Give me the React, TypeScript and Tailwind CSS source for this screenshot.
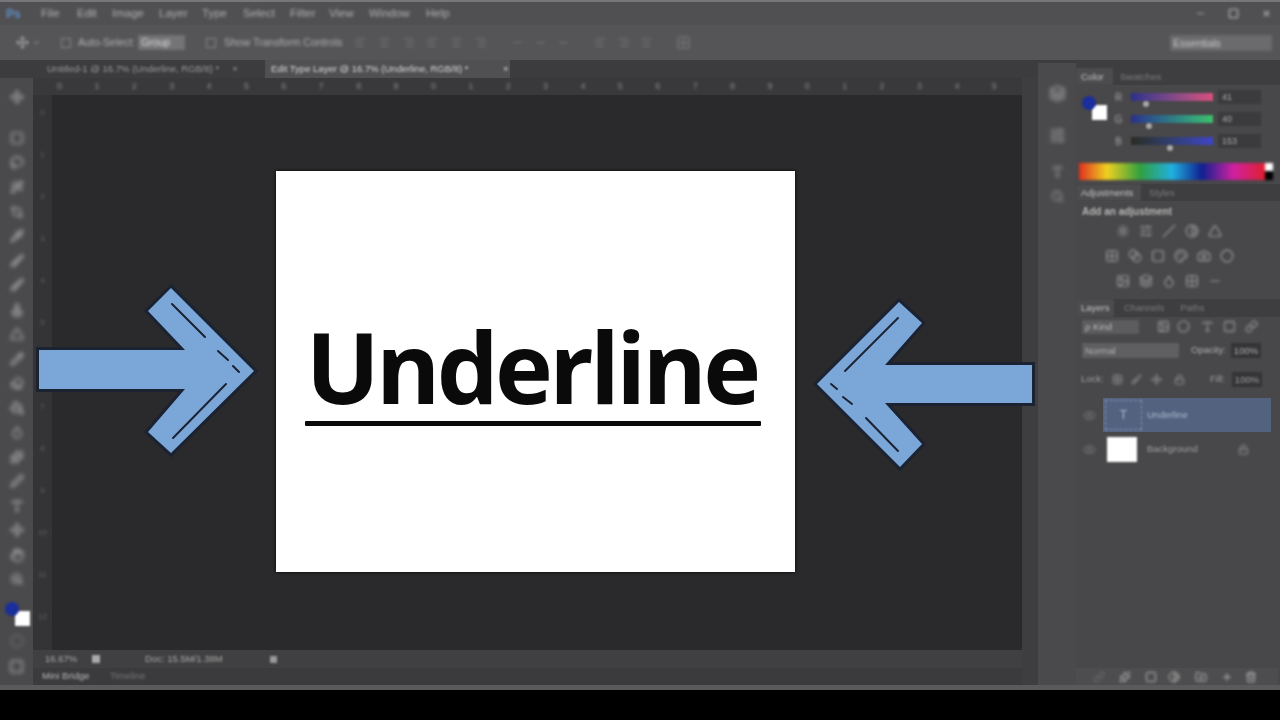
import {
  Blend, Brush, Circle, Contrast, Crop, Droplet, Eraser, Eye, FolderPlus, Grid2x2, Hand, Image, Layers, Lasso, Link, Lock, Minus,
  Move, PaintBucket, Palette, Pen, Pencil, Plus, Search, Slash, Square, Stamp, Sun, Trash2, Triangle, Type, Wand2, ZoomIn,
  AlignCenter, AlignLeft, AlignRight, Pipette, Sparkles, SlidersHorizontal, Camera, ChevronDown,
} from "lucide-react";
import type { ComponentType } from "react";

type Ico = ComponentType<{ className?: string; size?: number; strokeWidth?: number }>;

const menus = [
  { t: "File", w: "w-[36px]" },
  { t: "Edit", w: "w-[35px]" },
  { t: "Image", w: "w-[47px]" },
  { t: "Layer", w: "w-[43px]" },
  { t: "Type", w: "w-[41px]" },
  { t: "Select", w: "w-[47px]" },
  { t: "Filter", w: "w-[39px]" },
  { t: "View", w: "w-[40px]" },
  { t: "Window", w: "w-[57px]" },
  { t: "Help", w: "w-[30px]" },
];

const alignIcons: Ico[] = [AlignLeft, AlignCenter, AlignRight, AlignLeft, AlignCenter, AlignRight];
const distIcons: Ico[] = [Minus, Minus, Minus];

const tools: Ico[] = [
  Square, Lasso, Wand2, Crop, Pipette, Brush, Brush, Stamp, Triangle, Pencil, Eraser, PaintBucket, Droplet, Sparkles, Pen, Type, Move, Hand, ZoomIn,
];

const rulerNums = ["0", "1", "2", "3", "4", "5", "6", "7", "8", "9", "0", "1", "2", "3", "4", "5", "6", "7", "8", "9", "0", "1", "2", "3", "4", "5"];

const adjRows: Ico[][] = [
  [Sun, SlidersHorizontal, Slash, Contrast, Triangle],
  [Grid2x2, Blend, Square, Palette, Camera, Circle],
  [Image, Layers, Droplet, Grid2x2, Minus],
];

function ArrowShape({ shape, lines, className }: { shape: string; lines: number[][]; className: string }) {
  return (
    <svg className={className} viewBox="0 0 1280 720" fill="none">
      <polygon points={shape} fill="#7ba6d8" stroke="#1b2231" strokeWidth="6" strokeLinejoin="miter" paintOrder="stroke" />
      {lines.map((l) => (
        <line key={l.join()} x1={l[0]} y1={l[1]} x2={l[2]} y2={l[3]} stroke="#1b2231" strokeWidth="2" strokeLinecap="round" />
      ))}
    </svg>
  );
}

function ColorRow({ label, gradient, thumb, value }: { label: string; gradient: string; thumb: string; value: string }) {
  return (
    <div className="flex items-center h-[22px]">
      <span className="w-[25px] text-center text-[10px] text-[#aaa] blur-[1.4px]">{label}</span>
      <div className="w-[82px] relative">
        <div className={`h-[8px] blur-[1.2px] ${gradient}`} />
        <div className={`absolute top-[8px] w-[6px] h-[6px] bg-[#aaa] rounded-full blur-[1.2px] ${thumb}`} />
      </div>
      <div className="ml-[5px] w-[43px] h-[14px] bg-[#3b3a3c] text-[9px] text-[#aaa] pl-[4px] leading-[14px] blur-[1px]">{value}</div>
    </div>
  );
}

export default function App() {
  return (
    <div className="relative w-[1280px] h-[720px] bg-black overflow-hidden font-['Liberation_Sans',sans-serif]">
      <div className="h-[690px] flex flex-col bg-[#4a494b]">
        {/* title / menu */}
        <div className="h-[2px] bg-[#77777b]" />
        <div className="h-[23px] bg-[#504f52] flex items-center pl-[6px] pr-[8px]">
          <span className="w-[35px] text-[12px] font-bold text-[#5f8fc4] blur-[1.4px]">Ps</span>
          <div className="flex items-center text-[11.5px] text-[#b0b0b0] blur-[1.4px]">
            {menus.map((m) => (
              <span key={m.t} className={m.w}>{m.t}</span>
            ))}
          </div>
          <div className="ml-auto flex items-center gap-[22px] text-[#aaa] blur-[1.4px]">
            <Minus size={11} />
            <Square size={11} strokeWidth={3} />
            <Plus size={11} strokeWidth={3} className="rotate-45" />
          </div>
        </div>

        {/* options */}
        <div className="h-[35px] bg-[#555457] flex items-center pl-[16px] text-[10.5px] text-[#b0b0b0]">
          <Move size={13} className="blur-[1.4px]" />
          <ChevronDown size={9} className="ml-[3px] blur-[1.4px]" />
          <div className="ml-[20px] w-[10px] h-[10px] border border-[#888] blur-[1.4px]" />
          <span className="ml-[7px] w-[60px] blur-[1.4px]">Auto-Select:</span>
          <div className="w-[47px] h-[15px] bg-[#747376] text-[#ddd] pl-[3px] leading-[15px] blur-[1.4px]">Group</div>
          <div className="ml-[21px] w-[10px] h-[10px] border border-[#888] blur-[1.4px]" />
          <span className="ml-[8px] w-[130px] blur-[1.4px] whitespace-nowrap">Show Transform Controls</span>
          <div className="flex items-center gap-[11px] text-[#77777a] blur-[1.6px]">
            {alignIcons.map((Icon, i) => (
              <Icon key={i} size={13} />
            ))}
          </div>
          <div className="flex items-center gap-[10px] text-[#77777a] blur-[1.6px] ml-[24px]">
            {distIcons.map((Icon, i) => (
              <Icon key={i} size={13} />
            ))}
          </div>
          <div className="flex items-center gap-[10px] text-[#77777a] blur-[1.6px] ml-[24px]">
            <AlignLeft size={13} />
            <AlignRight size={13} />
            <AlignCenter size={13} />
          </div>
          <Grid2x2 size={15} className="ml-[23px] text-[#77777a] blur-[1.6px]" />
          <div className="ml-auto mr-[8px] w-[102px] h-[16px] bg-[#6b6a6d] text-[#ccc] leading-[16px] pl-[3px] blur-[1.4px]">Essentials</div>
        </div>

        <div className="flex-1 flex min-h-0">
          {/* left tools */}
          <div className="w-[33px] flex flex-col">
            <div className="h-[18px] bg-[#3c3b3d]" />
            <div className="flex-1 bg-[#4a494b] flex flex-col items-center pt-[12px] text-[#bdbdbd]">
              <Move size={14} className="blur-[2px] shrink-0" />
              <div className="mt-[27px] flex flex-col gap-[10.5px] items-center">
                {tools.map((Icon, i) => (
                  <Icon key={i} size={14} className="blur-[2px]" />
                ))}
              </div>
              <div className="relative w-[30px] h-[30px] mt-[16px] shrink-0">
                <div className="absolute left-[13px] top-[9px] w-[15px] h-[15px] bg-white blur-[1.2px]" />
                <div className="absolute left-[3px] top-0 w-[14px] h-[14px] rounded-full bg-[#1b2f9c] blur-[1.2px]" />
              </div>
              <Circle size={14} className="mt-[2px] text-[#777] blur-[2px] shrink-0" />
              <Square size={15} className="mt-[11px] blur-[2px] shrink-0" />
            </div>
          </div>

          {/* workspace */}
          <div className="flex-1 flex flex-col min-w-0">
            <div className="h-[18px] bg-[#3c3b3d] flex text-[9.5px] text-[#9a9a9a] pl-[14px]">
              <div className="w-[218px] flex items-center gap-[13px]">
                <span className="blur-[1.3px] whitespace-nowrap">Untitled-1 @ 16.7% (Underline, RGB/8) *</span>
                <span className="blur-[1.3px]">×</span>
              </div>
              <div className="w-[245px] bg-[#504f52] flex items-center pl-[6px] text-[#d8d8d8]">
                <span className="blur-[1.3px] whitespace-nowrap w-[232px]">Edit Type Layer @ 16.7% (Underline, RGB/8) *</span>
                <span className="blur-[1.3px]">×</span>
              </div>
            </div>
            <div className="h-[17px] bg-[#39383a] flex items-center pl-[19px]">
              <div className="w-[9px] h-[9px] bg-[#666] blur-[1.4px] mr-[19px] -ml-[14px]" />
              {rulerNums.map((n, i) => (
                <span key={i} className="w-[37.4px] shrink-0 text-[9px] text-[#8c8c8c] blur-[1.4px]">{n}</span>
              ))}
            </div>
            <div className="flex-1 flex min-h-0">
              <div className="w-[19px] bg-[#343335] flex flex-col items-center gap-[30px] pt-[12px] text-[8px] text-[#666] overflow-hidden">
                {Array.from({ length: 13 }).map((_, i) => (
                  <span key={i} className="blur-[1.4px]">{i}</span>
                ))}
              </div>
              <div className="flex-1 bg-[#2a2a2c] flex items-center justify-center">
                <div className="w-[519px] h-[401px] mr-[3px] mb-[2px] bg-white shadow-[0_0_3px_#000] flex flex-col items-center pt-[133px]">
                  <span className="font-['Open_Sans',sans-serif] font-bold text-[98px] leading-[124px] text-[#0a0a0a] tracking-[-3.7px] mr-[8px]">Underline</span>
                  <div className="w-[456px] h-[5px] bg-[#0a0a0a] -mt-[7px] mr-[6px] rounded-[1px]" />
                </div>
              </div>
            </div>
            {/* status */}
            <div className="h-[18px] bg-[#403f41] flex items-center pl-[12px] text-[9.5px] text-[#aaa]">
              <span className="w-[47px] blur-[1.3px]">16.67%</span>
              <div className="w-[8px] h-[8px] bg-[#aaa] blur-[1.3px]" />
              <span className="ml-[45px] w-[125px] blur-[1.3px]">Doc: 15.5M/1.38M</span>
              <div className="w-[7px] h-[7px] bg-[#999] blur-[1.3px]" />
            </div>
            <div className="h-[17px] bg-[#3b3a3c] flex items-center pl-[9px] text-[9.5px] text-[#b8b8b8]">
              <span className="w-[68px] blur-[1.3px]">Mini Bridge</span>
              <span className="text-[#777] blur-[1.3px]">Timeline</span>
            </div>
          </div>

          {/* scroll + dock */}
          <div className="w-[16px] bg-[#3e3d3f] flex flex-col">
            <div className="h-[18px] bg-[#3c3b3d]" />
          </div>
          <div className="w-[38px] bg-[#4a494b] flex flex-col items-center text-[#b0b0b0]">
            <div className="h-[3px] w-full bg-[#3c3b3d] mb-[22px]" />
            <Layers size={17} className="blur-[2px]" />
            <SlidersHorizontal size={17} className="mt-[25px] blur-[2px]" />
            <Type size={13} className="mt-[21px] blur-[2px]" />
            <Search size={13} className="mt-[12px] blur-[2px]" />
          </div>

          {/* panels */}
          <div className="w-[204px] flex flex-col bg-[#484749]">
            <div className="h-[8px] bg-[#3e3d3f]" />
            <div className="h-[17px] bg-[#3e3d3f] flex text-[9.5px]">
              <div className="w-[37px] bg-[#4c4b4d] pl-[5px] leading-[17px] text-[#c4c4c4] blur-[1px]">Color</div>
              <span className="ml-[7px] leading-[17px] text-[#7d7d7d] blur-[1.3px]">Swatches</span>
            </div>
            <div className="h-[78px] flex pt-[1px]">
              <div className="relative w-[30px] h-[40px] shrink-0">
                <div className="absolute left-[16px] top-[19px] w-[15px] h-[15px] bg-white blur-[1.2px]" />
                <div className="absolute left-[6px] top-[10px] w-[14px] h-[14px] rounded-full bg-[#1b2f9c] blur-[1.2px]" />
              </div>
              <div className="flex flex-col">
                <ColorRow label="R" gradient="bg-gradient-to-r from-[#2b2f8c] to-[#d94f7c]" thumb="left-[12px]" value="41" />
                <ColorRow label="G" gradient="bg-gradient-to-r from-[#2b2f8c] to-[#3fc06a]" thumb="left-[15px]" value="40" />
                <ColorRow label="B" gradient="bg-gradient-to-r from-[#2a2d22] to-[#4044c8]" thumb="left-[36px]" value="153" />
              </div>
            </div>
            <div className="h-[17px] ml-[3px] mr-[7px] flex blur-[1.5px]">
              <div className="flex-1 bg-[linear-gradient(90deg,#e03020,#f0d020_15%,#30a040_33%,#20b0e0_50%,#102090_66%,#d020a0_83%,#e02030)]" />
              <div className="w-[8px] bg-[linear-gradient(#fff_50%,#000_50%)]" />
            </div>
            <div className="h-[17px] mt-[4px] bg-[#3e3d3f] flex text-[9.5px]">
              <div className="w-[65px] bg-[#4c4b4d] pl-[5px] leading-[17px] text-[#c4c4c4] blur-[1px]">Adjustments</div>
              <span className="ml-[8px] leading-[17px] text-[#7d7d7d] blur-[1.3px]">Styles</span>
            </div>
            <div className="pl-[6px] pt-[3px] text-[10px] font-bold text-[#b8b8b8] blur-[1.3px]">Add an adjustment</div>
            <div className="mt-[5px] flex flex-col gap-[11px] items-center text-[#a0a0a0] h-[75px]">
              {adjRows.map((row, r) => (
                <div key={r} className="flex gap-[9px] -ml-[18px]">
                  {row.map((Icon, i) => (
                    <Icon key={i} size={14} className="blur-[1.8px]" />
                  ))}
                </div>
              ))}
            </div>

            <div className="h-[18px] bg-[#3e3d3f] flex text-[9.5px]">
              <div className="w-[38px] bg-[#4c4b4d] pl-[5px] leading-[18px] text-[#c4c4c4] blur-[1px]">Layers</div>
              <span className="ml-[10px] leading-[18px] text-[#7d7d7d] blur-[1.3px]">Channels</span>
              <span className="ml-[16px] leading-[18px] text-[#7d7d7d] blur-[1.3px]">Paths</span>
            </div>
            <div className="h-[19px] flex items-center pl-[6px] text-[#a0a0a0]">
              <div className="w-[57px] h-[14px] bg-[#5c5b5e] text-[9.5px] leading-[14px] pl-[3px] text-[#bbb] blur-[1.3px]">ρ Kind</div>
              <Image size={13} className="ml-[18px] blur-[1.8px]" />
              <Circle size={13} className="ml-[7px] blur-[1.8px]" />
              <Type size={13} className="ml-[11px] blur-[1.8px]" />
              <Square size={13} className="ml-[9px] blur-[1.8px]" />
              <Link size={13} className="ml-[9px] blur-[1.8px]" />
            </div>
            <div className="h-[29px] flex items-center pl-[6px] text-[9.5px] text-[#b0b0b0]">
              <div className="w-[97px] h-[15px] bg-[#5f5e61] leading-[15px] pl-[3px] blur-[1.3px]">Normal</div>
              <span className="ml-[12px] w-[40px] blur-[1.3px]">Opacity:</span>
              <div className="w-[30px] h-[15px] bg-[#353436] text-center leading-[15px] blur-[1px]">100%</div>
            </div>
            <div className="h-[28px] flex items-center pl-[5px] text-[9.5px] text-[#a0a0a0]">
              <span className="w-[31px] blur-[1.3px]">Lock:</span>
              <Grid2x2 size={11} className="blur-[1.6px]" />
              <Brush size={11} className="ml-[8px] blur-[1.6px]" />
              <Move size={11} className="ml-[9px] blur-[1.6px]" />
              <Lock size={11} className="ml-[12px] blur-[1.6px]" />
              <span className="ml-[25px] w-[22px] blur-[1.3px]">Fill:</span>
              <div className="w-[30px] h-[15px] bg-[#353436] text-center leading-[15px] blur-[1px]">100%</div>
            </div>
            <div className="h-[34px] flex items-center mt-[5px]">
              <Eye size={13} className="ml-[7px] text-[#777] blur-[1.4px]" />
              <div className="ml-[7px] flex-1 mr-[9px] h-full bg-[#52627f] flex items-center pl-[2px]">
                <div className="w-[37px] h-[30px] border border-dashed border-[#8a9ab5] flex items-center justify-center text-[13px] text-[#a9b5cc] blur-[1.1px]">T</div>
                <span className="ml-[5px] text-[9.5px] text-[#aeb9cd] blur-[1.3px]">Underline</span>
              </div>
            </div>
            <div className="h-[33px] flex items-center mt-[1px]">
              <Eye size={13} className="ml-[7px] text-[#777] blur-[1.4px]" />
              <div className="ml-[11px] w-[30px] h-[25px] bg-white blur-[1.2px]" />
              <span className="ml-[10px] text-[9.5px] text-[#a0a0a0] blur-[1.3px]">Background</span>
              <Lock size={11} className="ml-[40px] text-[#a0a0a0] blur-[1.4px]" />
            </div>
            <div className="flex-1" />
            <div className="h-[17px] bg-[#4d4c4e] flex items-center text-[#b8b8b8] mr-[2px]">
              <Link size={12} className="ml-[17px] text-[#777] blur-[1.8px]" />
              <Sparkles size={12} className="ml-[14px] blur-[1.8px]" />
              <Square size={12} className="ml-[14px] blur-[1.8px]" />
              <Contrast size={12} className="ml-[11px] blur-[1.8px]" />
              <FolderPlus size={12} className="ml-[15px] blur-[1.8px]" />
              <Plus size={12} className="ml-[14px] blur-[1.8px]" />
              <Trash2 size={12} className="ml-[12px] blur-[1.8px]" />
            </div>
          </div>
        </div>
        <div className="h-[5px] bg-[#5a595c] blur-[0.5px]" />
      </div>

      {/* arrows over the window */}
      <ArrowShape
        className="absolute inset-0 w-[1280px] h-[720px] pointer-events-none"
        shape="254,371 171,288 148,311 185,350 39,350 39,389 185,389 148,432 171,453"
        lines={[
          [172, 304, 205, 337],
          [218, 351, 228, 360],
          [233, 366, 239, 372],
          [173, 438, 226, 384],
        ]}
      />
      <ArrowShape
        className="absolute inset-0 w-[1280px] h-[720px] pointer-events-none"
        shape="817,384 899,302 922,323 885,365 1032,365 1032,403 885,403 922,444 900,467"
        lines={[
          [898, 318, 845, 371],
          [831, 384, 837, 389],
          [843, 397, 852, 404],
          [866, 418, 898, 451],
        ]}
      />
    </div>
  );
}
